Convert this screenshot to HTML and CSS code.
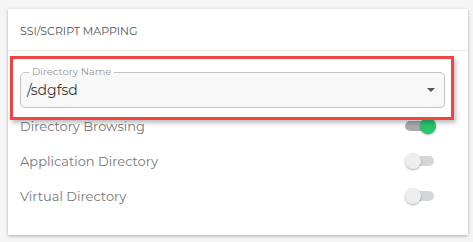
FILE: index.html
```html
<!DOCTYPE html>
<html lang="en">
<head>
    <meta charset="UTF-8">
    <title>SSI/Script Mapping</title>
    <link rel="stylesheet" href="styles.css">
</head>
<body>
    <div class="card">
        <div class="card-header">SSI/SCRIPT MAPPING</div>
        <div class="card-body">
            <div class="highlight">
                <div class="select-field">
                    <span class="select-label">Directory Name</span>
                    <span class="select-value">/sdgfsd</span>
                    <span class="select-arrow"></span>
                </div>
            </div>
            <div class="toggle-row">
                <span class="toggle-text">Directory Browsing</span>
                <span class="switch on"><span class="thumb"></span></span>
            </div>
            <div class="toggle-row">
                <span class="toggle-text">Application Directory</span>
                <span class="switch"><span class="thumb"></span></span>
            </div>
            <div class="toggle-row">
                <span class="toggle-text">Virtual Directory</span>
                <span class="switch"><span class="thumb"></span></span>
            </div>
        </div>
    </div>
</body>
</html>
```

FILE: styles.css
```css
body {
    margin: 0;
    padding: 9px 5px 7px 8px;
    background: #f5f5f5;
    font-family: "Montserrat", "Open Sans", sans-serif;
}
.card {
    background: #fff;
    box-shadow: 0 1px 3px rgba(0, 0, 0, .3);
    height: 226px;
}
.card-header {
    height: 41px;
    line-height: 44px;
    padding-left: 12px;
    font-size: 11px;
    color: #555;
    border-bottom: 1px solid #ececec;
}
.card-body {
    padding: 5px 34px 0 2px;
}
.highlight {
    position: relative;
    z-index: 1;
    border: 3px solid #f24343;
    padding: 13px 6px 9px 7px;
    margin-right: -20px;
    margin-bottom: -12px;
    box-shadow: 2px 3px 4px rgba(0, 0, 0, .25);
}
.select-field {
    position: relative;
    height: 34px;
    border: 1px solid #c4c4c4;
    border-radius: 5px;
    background: #f8f8f8;
    display: flex;
    align-items: center;
    padding: 0 9px 0 6px;
}
.select-label {
    position: absolute;
    top: -8px;
    left: 8px;
    padding: 0 3px;
    font-size: 10px;
    line-height: 14px;
    color: #999;
    background: linear-gradient(#fff 50%, #f8f8f8 50%);
}
.select-value {
    flex: 1;
    font-size: 14px;
    color: #3a3a3a;
}
.select-arrow {
    width: 0;
    height: 0;
    border-left: 4px solid transparent;
    border-right: 4px solid transparent;
    border-top: 4px solid #555;
}
.toggle-row {
    height: 35px;
    display: flex;
    align-items: center;
    justify-content: space-between;
    padding-left: 10px;
}
.toggle-text {
    font-size: 13px;
    color: #777;
}
.switch {
    position: relative;
    width: 29px;
    height: 10px;
    border-radius: 5px;
    background: #d3d6d9;
}
.switch .thumb {
    position: absolute;
    top: -3px;
    left: 0;
    width: 16px;
    height: 16px;
    border-radius: 50%;
    background: #eee;
    box-shadow: 0 1px 2px rgba(0, 0, 0, .3);
}
.switch.on {
    background: #a7abaf;
}
.switch.on .thumb {
    left: 15px;
    background: #27c46b;
}
```
